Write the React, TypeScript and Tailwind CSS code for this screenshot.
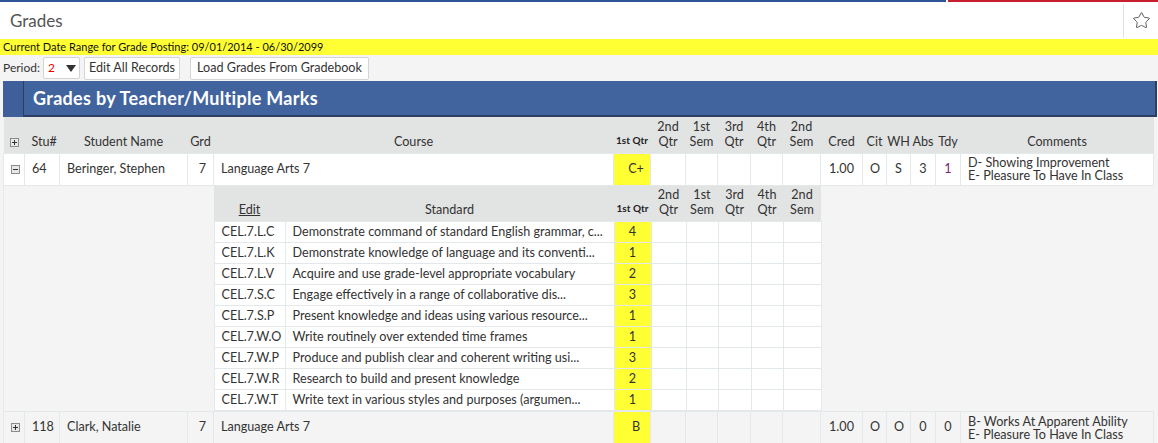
import { Star } from 'lucide-react';

const standards = [
  ['CEL.7.L.C', 'Demonstrate command of standard English grammar, c...', '4'],
  ['CEL.7.L.K', 'Demonstrate knowledge of language and its conventi...', '1'],
  ['CEL.7.L.V', 'Acquire and use grade-level appropriate vocabulary', '2'],
  ['CEL.7.S.C', 'Engage effectively in a range of collaborative dis...', '3'],
  ['CEL.7.S.P', 'Present knowledge and ideas using various resource...', '1'],
  ['CEL.7.W.O', 'Write routinely over extended time frames', '1'],
  ['CEL.7.W.P', 'Produce and publish clear and coherent writing usi...', '3'],
  ['CEL.7.W.R', 'Research to build and present knowledge', '2'],
  ['CEL.7.W.T', 'Write text in various styles and purposes (argumen...', '1'],
];

const markCols = ['2nd|Qtr', '1st|Sem', '3rd|Qtr', '4th|Qtr', '2nd|Sem'];

function Toggle({ open }: { open?: boolean }) {
  return (
    <svg width="9" height="9" viewBox="0 0 9 9" className="inline-block">
      <rect x="0.5" y="0.5" width="8" height="8" fill="#e8e8e8" stroke="#8c8c8c" />
      <line x1="2" y1="4.5" x2="7" y2="4.5" stroke="#333" />
      {!open && <line x1="4.5" y1="2" x2="4.5" y2="7" stroke="#333" />}
    </svg>
  );
}

function TwoLine({ label }: { label: string }) {
  const [a, b] = label.split('|');
  return (
    <>
      {a}
      <br />
      {b}
    </>
  );
}

const cell = 'border border-[#e3e8eb] px-[7px] text-[12.6px]';
const td = `${cell} text-[#333]`;
const th = 'align-bottom pb-[4px] font-normal text-[12.6px] leading-[15px] text-[#333] whitespace-nowrap';
const qtr = 'align-bottom pb-[5px] text-[10px] font-bold text-[#222] whitespace-nowrap px-0';

function StudentRow({
  open,
  stu,
  name,
  grade,
  cit,
  wh,
  abs,
  tdy,
  comments,
  bg,
}: {
  open?: boolean;
  stu: string;
  name: string;
  grade: string;
  cit: string;
  wh: string;
  abs: string;
  tdy: string;
  comments: string[];
  bg: string;
}) {
  return (
    <tr className={`h-[32px] ${bg}`}>
      <td className={`${td} text-center px-0`}>
        <Toggle open={open} />
      </td>
      <td className={td}>{stu}</td>
      <td className={td}>{name}</td>
      <td className={`${td} text-right px-[6px]`}>7</td>
      <td className={td}>Language Arts 7</td>
      <td className={`${td} bg-[#ffff33] text-center pl-[10px] pr-[2px]`}>{grade}</td>
      {markCols.map((c) => (
        <td key={c} className={td}></td>
      ))}
      <td className={`${td} text-center px-0`}>1.00</td>
      <td className={`${td} text-center px-0`}>{cit}</td>
      <td className={`${td} text-center px-0`}>{wh}</td>
      <td className={`${td} text-center px-0`}>{abs}</td>
      <td className={`${cell} text-center px-0 ${tdy === '1' ? 'text-[#7b1f7b]' : 'text-[#333]'}`}>{tdy}</td>
      <td className={`${td} leading-[13px] whitespace-nowrap`}>
        {comments.map((c) => (
          <div key={c}>{c}</div>
        ))}
      </td>
    </tr>
  );
}

export default function App() {
  return (
    <div className="min-h-[443px] w-[1158px] bg-[#f4f4f4] font-['Lato','Liberation_Sans',sans-serif] text-[#333]">
      {/* top strip */}
      <div className="flex h-[2px]">
        <div className="w-[946px] bg-[#2f5597]" />
        <div className="w-[2px] bg-white" />
        <div className="flex-1 bg-[#c8202f]" />
      </div>

      {/* page title */}
      <div className="flex h-[37px] items-center bg-white">
        <div className="flex-1 pl-[10px] text-[17px] text-[#555]">Grades</div>
        <div className="flex h-[34px] w-[35px] items-center justify-center border-l border-[#e2e2e2]">
          <Star size={19} strokeWidth={1.2} className="text-[#555]" />
        </div>
      </div>

      {/* date range */}
      <div className="flex h-[16px] items-center bg-[#ffff33] pl-[3px] text-[11px] text-[#111]">
        Current Date Range for Grade Posting: 09/01/2014 - 06/30/2099
      </div>

      {/* toolbar */}
      <div className="flex h-[26px] items-center pl-[3px] text-[12px]">
        <span className="mr-[3px] text-[#333]">Period:</span>
        <div className="flex h-[22px] w-[37px] items-center justify-between rounded-[2px] border border-[#d4d4d4] bg-white pl-[4px] pr-[3px]">
          <span className="text-[#e00]">2</span>
          <svg width="10" height="7" viewBox="0 0 10 7">
            <polygon points="0,0 10,0 5,7" fill="#333" />
          </svg>
        </div>
        <button className="ml-[4px] h-[23px] w-[96px] rounded-[2px] border border-[#d4d4d4] bg-white text-[12.6px] text-[#333]">
          Edit All Records
        </button>
        <button className="ml-[10px] h-[23px] w-[179px] rounded-[2px] border border-[#d4d4d4] bg-white text-[12.6px] text-[#333]">
          Load Grades From Gradebook
        </button>
      </div>

      {/* section bar */}
      <div className="ml-[3px] mr-[1px] flex h-[36px] bg-[#3f5f9b]">
        <div className="ml-[20px] flex flex-1 items-center border-b-2 border-l border-r-2 border-[#2c3f63] bg-[#41649f] pl-[9px] text-[18px] font-bold tracking-[0.3px] text-white">
          Grades by Teacher/Multiple Marks
        </div>
      </div>

      {/* grades table */}
      <table className="ml-[3px] w-[1150px] table-fixed border-collapse">
        <colgroup>
          <col className="w-[21px]" />
          <col className="w-[35px]" />
          <col className="w-[128px]" />
          <col className="w-[26px]" />
          <col className="w-[400px]" />
          <col className="w-[37px]" />
          <col className="w-[35px]" />
          <col className="w-[32px]" />
          <col className="w-[33px]" />
          <col className="w-[32px]" />
          <col className="w-[38px]" />
          <col className="w-[42px]" />
          <col className="w-[24px]" />
          <col className="w-[24px]" />
          <col className="w-[25px]" />
          <col className="w-[25px]" />
          <col className="w-[193px]" />
        </colgroup>
        <thead>
          <tr className="h-[36px] bg-[#e2e3e3]">
            <th className={`${th} pb-[3px]`}>
              <Toggle />
            </th>
            <th className={`${th} text-left pl-[7px]`}>Stu#</th>
            <th className={th}>Student Name</th>
            <th className={th}>Grd</th>
            <th className={th}>Course</th>
            <th className={qtr}>1st Qtr</th>
            {markCols.map((c) => (
              <th key={c} className={th}>
                <TwoLine label={c} />
              </th>
            ))}
            <th className={th}>Cred</th>
            <th className={th}>Cit</th>
            <th className={th}>WH</th>
            <th className={th}>Abs</th>
            <th className={th}>Tdy</th>
            <th className={th}>Comments</th>
          </tr>
        </thead>
        <tbody>
          <StudentRow
            open
            stu="64"
            name="Beringer, Stephen"
            grade="C+"
            cit="O"
            wh="S"
            abs="3"
            tdy="1"
            comments={['D- Showing Improvement', 'E- Pleasure To Have In Class']}
            bg="bg-white"
          />
          <tr className="bg-[#f4f4f4]">
            <td colSpan={4} className="border-l border-[#e3e8eb]"></td>
            <td colSpan={7} className="p-0 align-top">
              <table className="w-[607px] table-fixed border-collapse">
                <colgroup>
                  <col className="w-[71px]" />
                  <col className="w-[329px]" />
                  <col className="w-[37px]" />
                  <col className="w-[35px]" />
                  <col className="w-[32px]" />
                  <col className="w-[33px]" />
                  <col className="w-[32px]" />
                  <col className="w-[38px]" />
                </colgroup>
                <thead>
                  <tr className="h-[36px] bg-[#e2e3e3]">
                    <th className={th}>
                      <span className="underline">Edit</span>
                    </th>
                    <th className={th}>Standard</th>
                    <th className={qtr}>1st Qtr</th>
                    {markCols.map((c) => (
                      <th key={c} className={th}>
                        <TwoLine label={c} />
                      </th>
                    ))}
                  </tr>
                </thead>
                <tbody>
                  {standards.map(([code, desc, mark]) => (
                    <tr key={code} className="h-[21px] bg-white">
                      <td className={`${td} whitespace-nowrap`}>{code}</td>
                      <td className={`${td} whitespace-nowrap overflow-hidden`}>{desc}</td>
                      <td className={`${td} bg-[#ffff33] text-center`}>{mark}</td>
                      {markCols.map((c) => (
                        <td key={c} className={td}></td>
                      ))}
                    </tr>
                  ))}
                </tbody>
              </table>
            </td>
            <td colSpan={6}></td>
          </tr>
          <StudentRow
            stu="118"
            name="Clark, Natalie"
            grade="B"
            cit="O"
            wh="O"
            abs="0"
            tdy="0"
            comments={['B- Works At Apparent Ability', 'E- Pleasure To Have In Class']}
            bg="bg-[#f4f4f4]"
          />
        </tbody>
      </table>
    </div>
  );
}
